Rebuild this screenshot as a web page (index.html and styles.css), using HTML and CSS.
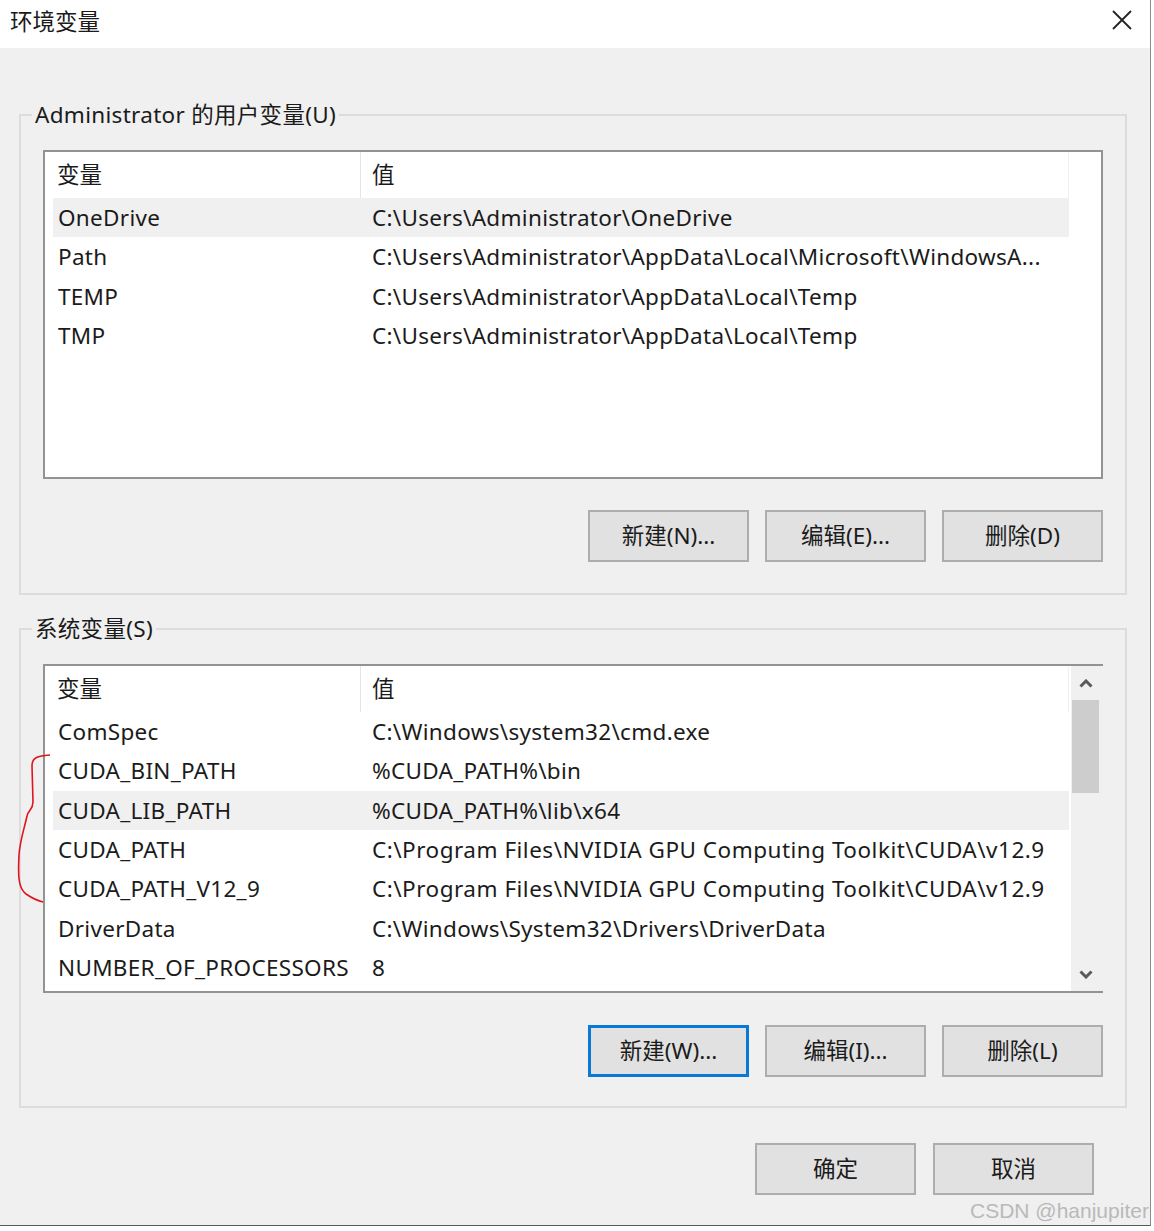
FILE: index.html
```html
<!DOCTYPE html>
<html lang="zh-CN">
<head>
<meta charset="utf-8">
<title>环境变量</title>
<link rel="stylesheet" href="styles.css">
</head>
<body>
<div class="window">
  <div class="titlebar">
    <span class="title">环境变量</span>
    <svg class="close" width="22" height="22" viewBox="0 0 22 22"><path d="M2 2 L20 20 M20 2 L2 20" stroke="#222" stroke-width="1.8" fill="none"/></svg>
  </div>
  <div class="body">
    <fieldset class="group g1">
      <legend>Administrator 的用户变量(U)</legend>
      <div class="list">
        <div class="rows">
          <div class="row head"><span class="c1">变量</span><span class="c2">值</span></div>
          <div class="row hl"><span class="c1">OneDrive</span><span class="c2">C:\Users\Administrator\OneDrive</span></div>
          <div class="row"><span class="c1">Path</span><span class="c2">C:\Users\Administrator\AppData\Local\Microsoft\WindowsA...</span></div>
          <div class="row"><span class="c1">TEMP</span><span class="c2">C:\Users\Administrator\AppData\Local\Temp</span></div>
          <div class="row"><span class="c1">TMP</span><span class="c2">C:\Users\Administrator\AppData\Local\Temp</span></div>
        </div>
      </div>
      <div class="btns">
        <button class="btn">新建(N)...</button>
        <button class="btn">编辑(E)...</button>
        <button class="btn">删除(D)</button>
      </div>
    </fieldset>

    <fieldset class="group g2">
      <legend>系统变量(S)</legend>
      <div class="list">
        <div class="rows">
          <div class="row head"><span class="c1">变量</span><span class="c2">值</span></div>
          <div class="row"><span class="c1">ComSpec</span><span class="c2">C:\Windows\system32\cmd.exe</span></div>
          <div class="row"><span class="c1">CUDA_BIN_PATH</span><span class="c2">%CUDA_PATH%\bin</span></div>
          <div class="row hl"><span class="c1">CUDA_LIB_PATH</span><span class="c2">%CUDA_PATH%\lib\x64</span></div>
          <div class="row"><span class="c1">CUDA_PATH</span><span class="c2 wide">C:\Program Files\NVIDIA GPU Computing Toolkit\CUDA\v12.9</span></div>
          <div class="row"><span class="c1">CUDA_PATH_V12_9</span><span class="c2 wide">C:\Program Files\NVIDIA GPU Computing Toolkit\CUDA\v12.9</span></div>
          <div class="row"><span class="c1">DriverData</span><span class="c2">C:\Windows\System32\Drivers\DriverData</span></div>
          <div class="row"><span class="c1">NUMBER_OF_PROCESSORS</span><span class="c2">8</span></div>
        </div>
        <div class="scrollbar">
          <div class="sb-btn"><svg width="14" height="9" viewBox="0 0 14 9"><path d="M1.5 7.5 L7 2 L12.5 7.5" stroke="#5a5a5a" stroke-width="3" fill="none"/></svg></div>
          <div class="sb-thumb"></div>
          <div class="sb-track"></div>
          <div class="sb-btn"><svg width="14" height="9" viewBox="0 0 14 9"><path d="M1.5 1.5 L7 7 L12.5 1.5" stroke="#5a5a5a" stroke-width="3" fill="none"/></svg></div>
        </div>
      </div>
      <div class="btns">
        <button class="btn focus">新建(W)...</button>
        <button class="btn">编辑(I)...</button>
        <button class="btn">删除(L)</button>
      </div>
    </fieldset>

    <div class="footer">
      <button class="btn">确定</button>
      <button class="btn">取消</button>
    </div>
  </div>

  <svg class="bracket" width="60" height="180" viewBox="0 0 60 180"><path d="M50 15 C38 16 32 17 32 26 L33 62 C33 70 28 70 27 76 C24 90 20 100 19 115 C18 135 18 148 26 154 C32 158 38 161 43 162" stroke="#e0141c" stroke-width="1.6" fill="none"/></svg>
  <div class="watermark">CSDN @hanjupiter</div>
</div>
</body>
</html>
```
FILE: styles.css
```css
html, body {
  margin: 0;
  padding: 0;
  background: #ffffff;
}

body {
  font-family: "Noto Sans", "Noto Sans CJK SC", sans-serif;
  color: #1b1b1b;
}

.window {
  position: relative;
  width: 1150px;
  border-right: 1px solid #8c8c8c;
  border-bottom: 1px solid #5c5c5c;
}

.titlebar {
  height: 48px;
  background: #ffffff;
  display: flex;
  align-items: flex-start;
  justify-content: space-between;
  padding: 5px 17px 0 10px;
  box-sizing: border-box;
}

.title {
  font-family: "Noto Sans CJK SC", sans-serif;
  font-size: 22.5px;
  line-height: 30px;
  color: #1b1b1b;
}

.close {
  margin-top: 4px;
}

.body {
  background: #f0f0f0;
  padding: 52px 23px 30px 19px;
}

.group {
  margin: 0;
  border: 2px solid #dcdcdc;
  padding: 20px 22px 31px 22px;
  min-width: 0;
}

.group legend {
  font-size: 22.5px;
  letter-spacing: 0.3px;
  line-height: 30px;
  padding: 0 3px;
  margin-left: -11px;
  color: #1b1b1b;
}

.g2 {
  margin-top: 19px;
  padding-bottom: 29px;
}

.list {
  height: 329px;
  box-sizing: border-box;
  border: 2px solid #939393;
  background: #ffffff;
  display: flex;
  padding-left: 8px;
  gap: 2px;
}

.rows {
  width: 1016px;
  flex: none;
}

.row {
  display: flex;
  height: 39.33px;
  align-items: center;
  font-size: 22.5px;
  letter-spacing: 0.3px;
  white-space: nowrap;
}

.row.head {
  height: 46px;
  font-size: 22.5px;
  letter-spacing: 0;
  border-right: 1px solid #f0f0f0;
  box-sizing: border-box;
}

.row.hl {
  background: #f0f0f0;
}

.c1 {
  width: 308px;
  box-sizing: border-box;
  padding-left: 5px;
  flex: none;
}

.head .c1 {
  align-self: stretch;
  display: flex;
  align-items: center;
  border-right: 1px solid #e5e5e5;
  padding-left: 4px;
  padding-bottom: 3px;
}

.head .c2 {
  padding-bottom: 3px;
}

.c2 {
  padding-left: 11px;
  overflow: hidden;
}

.c2.wide {
  letter-spacing: 0.5px;
}

.scrollbar {
  width: 32px;
  flex: none;
  background: #f0f0f0;
  display: flex;
  flex-direction: column;
}

.sb-btn {
  height: 34px;
  display: flex;
  align-items: center;
  justify-content: center;
  flex: none;
  padding-right: 3px;
}

.sb-thumb {
  height: 93px;
  width: 27px;
  margin-left: 1px;
  background: #cdcdcd;
  flex: none;
}

.sb-track {
  flex: 1;
}

.btns {
  display: flex;
  justify-content: flex-end;
  gap: 16px;
  margin-top: 31px;
}

.g2 .btns {
  margin-top: 32px;
}

.btn {
  width: 161px;
  height: 52px;
  box-sizing: border-box;
  background: #e1e1e1;
  border: 2px solid #adadad;
  font-family: "Noto Sans", "Noto Sans CJK SC", sans-serif;
  font-size: 22.5px;
  color: #1b1b1b;
  padding: 0 0 4px 0;
}

.btn.focus {
  border: 3px solid #0a78d7;
}

.footer {
  display: flex;
  justify-content: flex-end;
  gap: 17px;
  margin-top: 35px;
  padding-right: 33px;
}

.bracket {
  position: absolute;
  left: 0;
  top: 740px;
}

.watermark {
  position: absolute;
  left: 970px;
  top: 1199px;
  font-family: "Liberation Sans", sans-serif;
  font-size: 21px;
  color: #b9b9b9;
  white-space: nowrap;
}
```
